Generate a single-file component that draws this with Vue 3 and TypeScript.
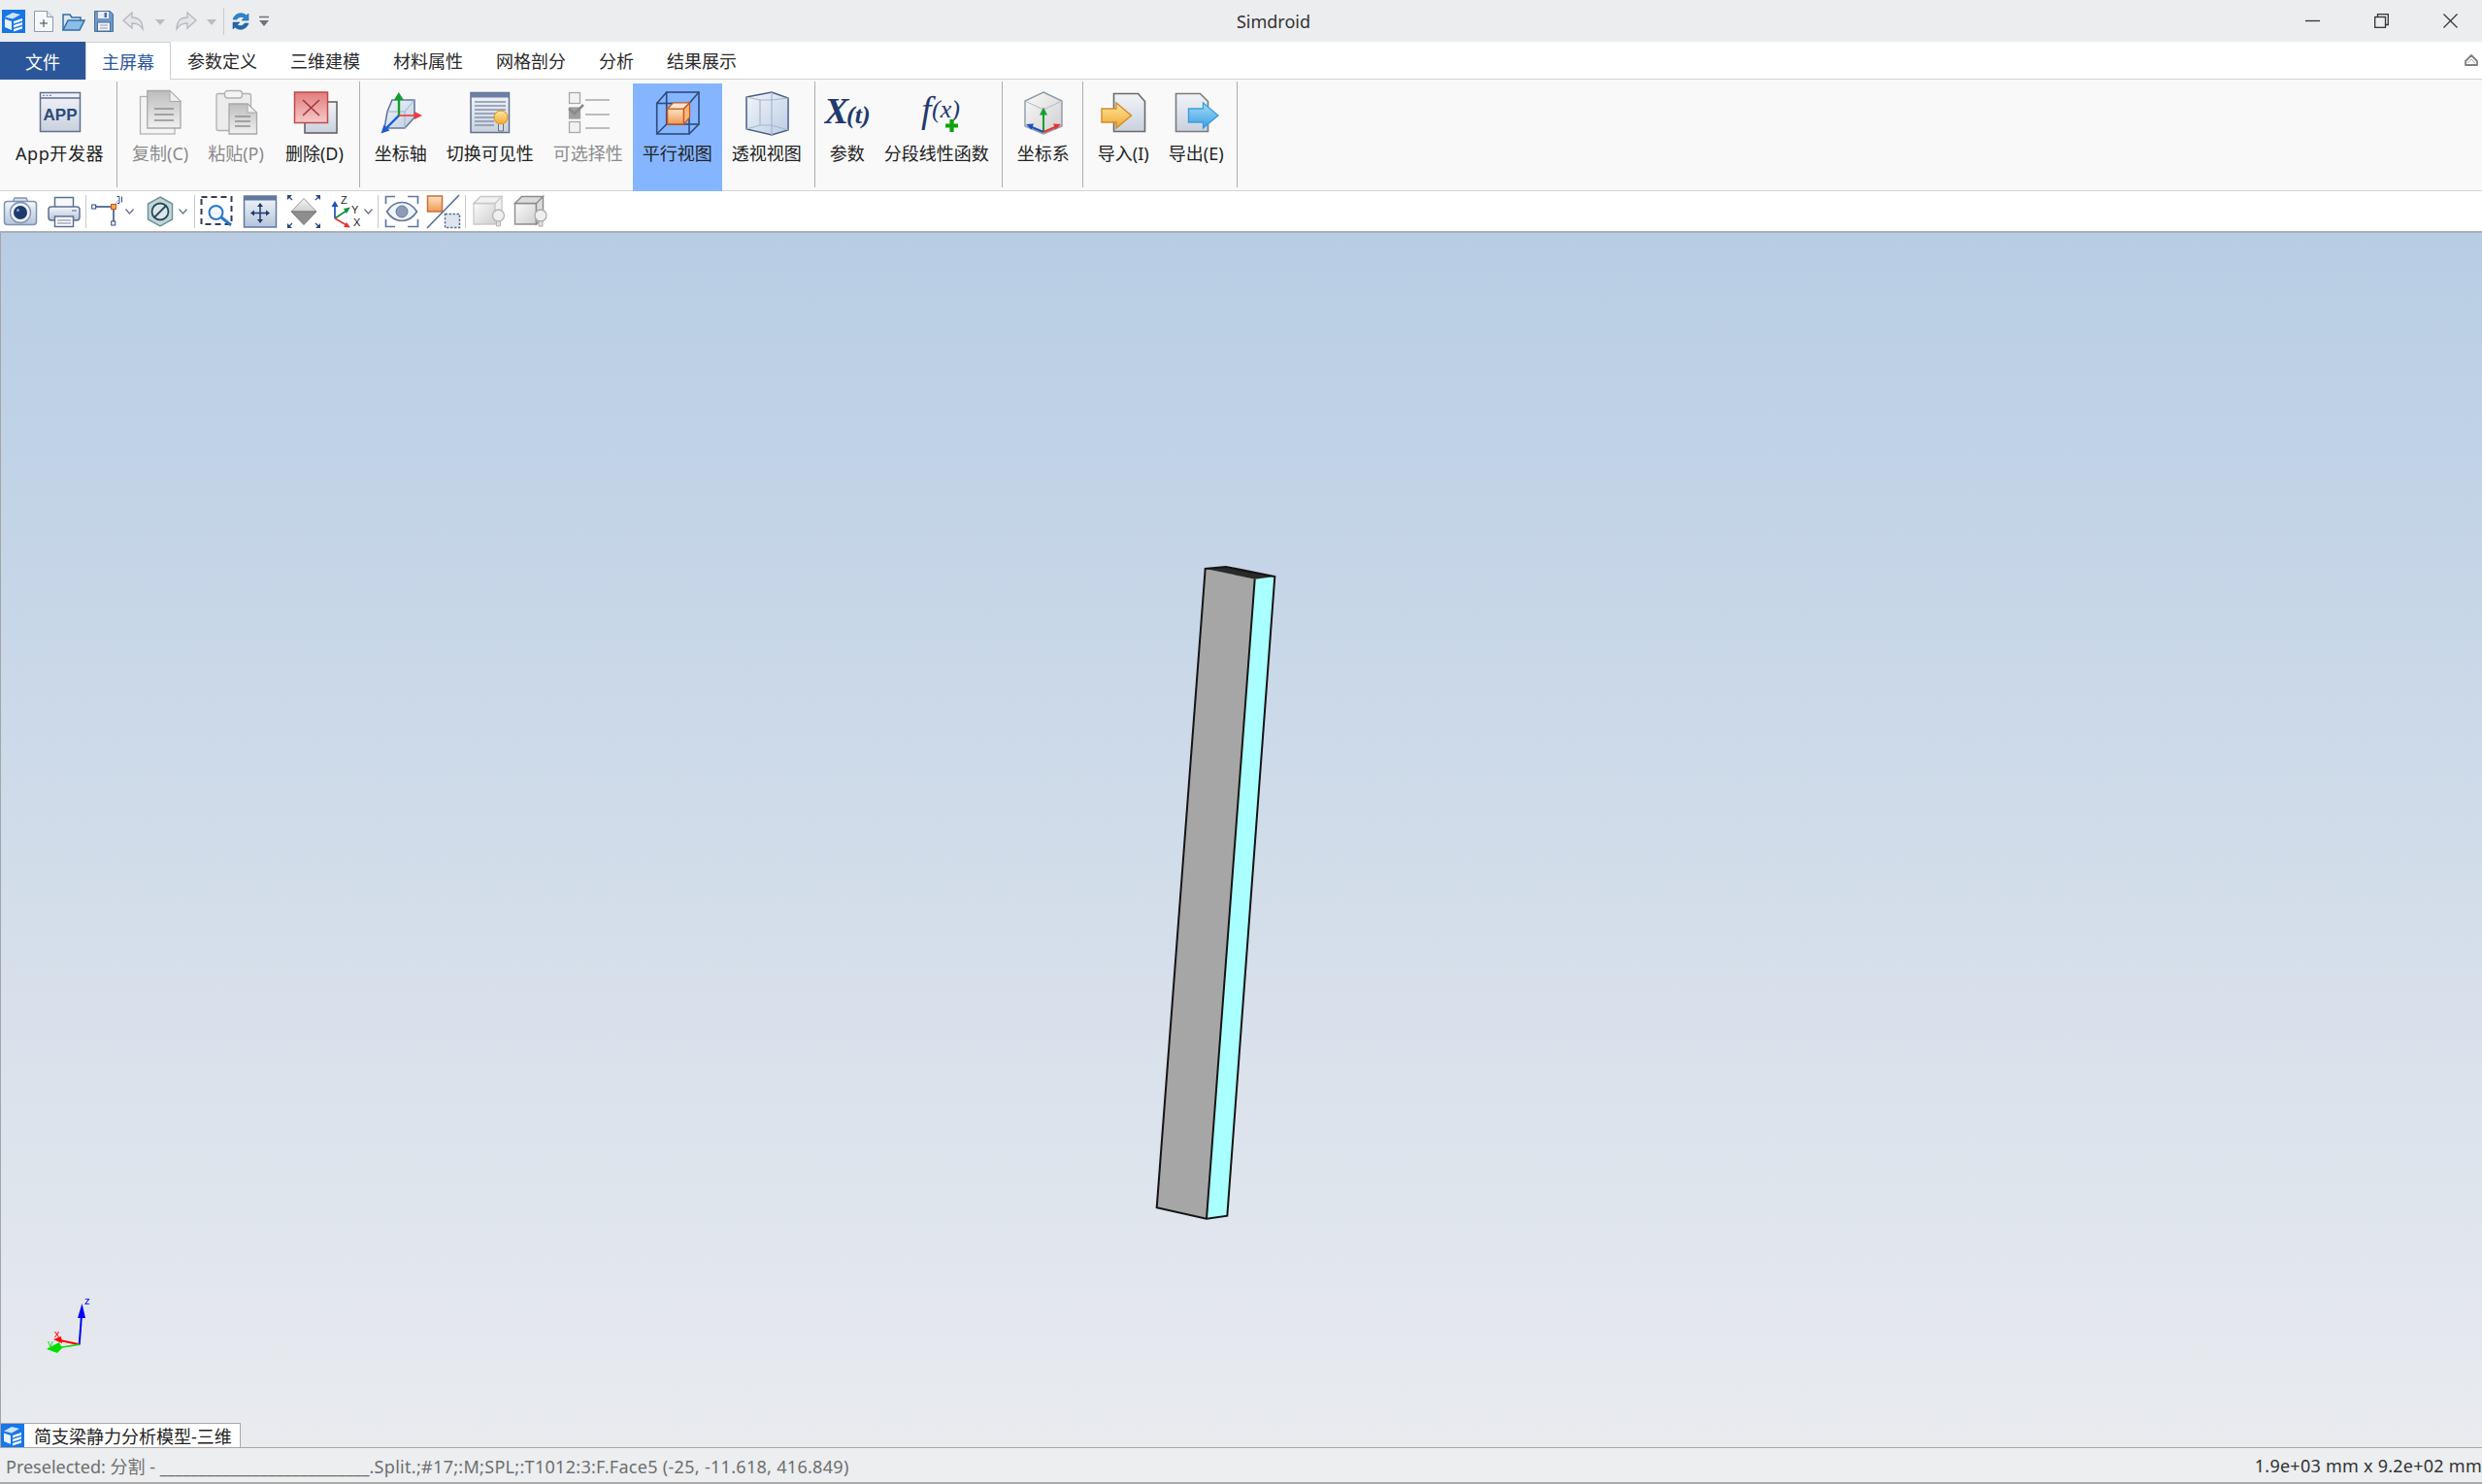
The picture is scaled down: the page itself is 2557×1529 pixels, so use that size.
<template>
  <div class="app">
    <!-- shared gradients -->
    <svg class="defs" width="0" height="0">
      <defs>
        <linearGradient id="gPage" x1="0" y1="0" x2="0" y2="1"><stop offset="0" stop-color="#f2f4f8" /><stop offset="1" stop-color="#c9d1de" /></linearGradient>
        <linearGradient id="gGray" x1="0" y1="0" x2="0" y2="1"><stop offset="0" stop-color="#bdbdbd" /><stop offset="1" stop-color="#f0f0f0" /></linearGradient>
        <linearGradient id="gRed" x1="0" y1="0" x2="0" y2="1"><stop offset="0" stop-color="#e27d7d" /><stop offset="1" stop-color="#f6c9c9" /></linearGradient>
        <linearGradient id="gGlass" x1="0" y1="0" x2="1" y2="1"><stop offset="0" stop-color="#f2f6fb" /><stop offset="1" stop-color="#bccde4" /></linearGradient>
        <linearGradient id="gOrange" x1="0" y1="0" x2="0" y2="1"><stop offset="0" stop-color="#fde3c6" /><stop offset="1" stop-color="#ee9a52" /></linearGradient>
        <linearGradient id="gYellow" x1="0" y1="0" x2="0" y2="1"><stop offset="0" stop-color="#fde7a4" /><stop offset="1" stop-color="#f0a92c" /></linearGradient>
        <linearGradient id="gBlue" x1="0" y1="0" x2="0" y2="1"><stop offset="0" stop-color="#a6dcf8" /><stop offset="1" stop-color="#3a9fe0" /></linearGradient>
        <linearGradient id="gBody" x1="0" y1="0" x2="0" y2="1"><stop offset="0" stop-color="#f5f7fa" /><stop offset="1" stop-color="#b4c4dc" /></linearGradient>
        <linearGradient id="gCube" x1="0" y1="0" x2="1" y2="1"><stop offset="0" stop-color="#fafafa" /><stop offset="1" stop-color="#cfcfcf" /></linearGradient>
        <linearGradient id="gDiamond" x1="0" y1="0" x2="0" y2="1"><stop offset="0" stop-color="#f4f4f4" /><stop offset="1" stop-color="#d0d0d0" /></linearGradient>
      </defs>
    </svg>

    <!-- title bar -->
    <header class="titlebar">
      <div class="qat">
        <svg class="qat-icon logo" viewBox="0 0 24 24">
          <rect width="24" height="24" fill="#1677e6" />
          <path d="M3 7.500 11 3l8 2-8 4.500z" fill="#cfe4fb" />
          <path d="M3 9.500l7 2.500v9l-7-3z" fill="#e8f2fd" />
          <path d="M12 12l9-3v2.600l-9 3zM12 16l9-3v2.600l-9 3zM12 20l9-3v2.600l-9 3z" fill="#fff" />
        </svg>
        <svg class="qat-icon" viewBox="0 0 24 24">
          <path d="M2.500 1.500h13l6 6v15h-19z" fill="#f7f8fb" stroke="#8d99ad" />
          <path d="M15.500 1.500v6h6" fill="#dfe4ec" stroke="#8d99ad" />
          <path d="M12 10v8M8 14h8" stroke="#444" />
        </svg>
        <svg class="qat-icon" viewBox="0 0 24 24">
          <path d="M1 21V5h7l2 3h9v4" fill="#dce7f4" stroke="#2f6ea8" stroke-width="1.500" />
          <path d="M1 21l5-10h17l-5 10z" fill="#8cbde6" stroke="#2f6ea8" stroke-width="1.500" />
        </svg>
        <svg class="qat-icon" viewBox="0 0 24 24">
          <path d="M2.500 1.500h16l3 3v18h-19z" fill="#6f98c8" stroke="#4a6f9c" />
          <rect x="6" y="2" width="11" height="7" fill="#e8eef6" />
          <rect x="12.500" y="3" width="2.500" height="5" fill="#4a6f9c" />
          <rect x="5.500" y="13" width="13" height="9" fill="#f2f4f8" stroke="#4a6f9c" />
          <path d="M8 16h8M8 19h8" stroke="#8d99ad" />
        </svg>
        <svg class="qat-icon" viewBox="0 0 24 24">
          <path d="M10 3 1 11l9 8v-5c5 0 8 1 11 6 0-8-4-12-11-12z" fill="#e3e5e8" stroke="#b4b8be" stroke-width="1.300" />
        </svg>
        <svg class="qat-drop" viewBox="0 0 10 24"><path d="M0 10h10l-5 6z" fill="#b9bcc1" /></svg>
        <svg class="qat-icon redo" viewBox="0 0 24 24">
          <path d="M14 3l9 8-9 8v-5c-5 0-8 1-11 6 0-8 4-12 11-12z" fill="#e3e5e8" stroke="#b4b8be" stroke-width="1.300" />
        </svg>
        <svg class="qat-drop" viewBox="0 0 10 24"><path d="M0 10h10l-5 6z" fill="#b9bcc1" /></svg>
        <span class="qat-sep"></span>
        <svg class="qat-icon refresh" viewBox="0 0 24 24">
          <path d="M4 10a8.500 8.500 0 0 1 14-4l2-2v7h-7l2.500-2.500A5 5 0 0 0 8 10z" fill="#2a86d0" stroke="#1f5f9a" stroke-width=".6" />
          <path d="M20 14a8.500 8.500 0 0 1-14 4l-2 2v-7h7l-2.500 2.500A5 5 0 0 0 16 14z" fill="#1d69ad" stroke="#1f5f9a" stroke-width=".6" />
        </svg>
        <svg class="qat-drop qat-more" viewBox="0 0 10 24"><path d="M0 7.500h10" stroke="#6d7278" stroke-width="1.500" /><path d="M0 11h10l-5 6z" fill="#6d7278" /></svg>
      </div>
      <div class="title">Simdroid</div>
      <div class="win-controls">
        <svg class="win-btn" viewBox="0 0 15 15"><path d="M0 7.500h15" stroke="#333" stroke-width="1.300" /></svg>
        <svg class="win-btn" viewBox="0 0 15 15"><path d="M3.500 3V.7h10.800v10.800H12" fill="none" stroke="#333" stroke-width="1.300" /><rect x=".7" y="3.500" width="10.800" height="10.800" fill="none" stroke="#333" stroke-width="1.300" /></svg>
        <svg class="win-btn" viewBox="0 0 15 15"><path d="M.5.5l14 14M14.500.5l-14 14" stroke="#333" stroke-width="1.200" /></svg>
      </div>
    </header>

    <!-- menu tabs -->
    <nav class="tabs">
      <div class="tab tab-file">文件</div>
      <div v-for="t in tabs" :key="t" class="tab" :class="{ active: t === activeTab }">{{ t }}</div>
      <svg class="collapse" viewBox="0 0 14 12">
        <path d="M7 1 1 7v4h12V7z" fill="none" stroke="#7d7f84" stroke-width="1.800" stroke-linejoin="round" />
        <path d="M3 9l4-4 4 4" fill="none" stroke="#a8aaae" stroke-width="1" />
      </svg>
    </nav>

    <!-- ribbon -->
    <section class="ribbon">
      <div class="group first">
        <div class="item app-item">
          <svg class="rb-icon" viewBox="0 0 48 48">
            <rect x="3.500" y="3.500" width="41" height="40" fill="url(#gPage)" stroke="#5f6f92" stroke-width="1.500" />
            <path d="M3.500 9h41" stroke="#5f6f92" stroke-width="1.500" />
            <path d="M6 6.300h2M9.500 6.300h2M13 6.300h2" stroke="#5f6f92" />
            <text x="24" y="32" class="app-glyph">APP</text>
          </svg>
          <span class="label">App开发器</span>
        </div>
      </div>

      <div class="group g-edit">
        <div class="item disabled">
          <svg class="rb-icon" viewBox="0 0 48 48">
            <rect x="3.500" y="7.500" width="35.500" height="38.500" fill="#f4f4f4" stroke="#b3b3b3" stroke-width="1.300" />
            <path d="M10.800 1.500H34L45 12.500V40H10.800z" fill="url(#gGray)" stroke="#a8a8a8" stroke-width="1.300" />
            <path d="M34 1.500v11h11z" fill="#efefef" stroke="#a8a8a8" />
            <path d="M18 20h20M18 26h20M18 32h20" stroke="#8f8f8f" stroke-width="1.500" />
          </svg>
          <span class="label">复制(C)</span>
        </div>
        <div class="item disabled">
          <svg class="rb-icon" viewBox="0 0 48 48">
            <rect x="4" y="4.500" width="35.500" height="38" rx="2" fill="#ececec" stroke="#b0b0b0" stroke-width="1.300" />
            <rect x="12.500" y="1.500" width="18" height="7.500" rx="3" fill="#f4f4f4" stroke="#b0b0b0" stroke-width="1.300" />
            <path d="M17 15h19l9.500 9v22H17z" fill="url(#gGray)" stroke="#a8a8a8" stroke-width="1.300" />
            <path d="M36 15v9h9.500z" fill="#efefef" stroke="#a8a8a8" />
            <path d="M23 28h16M23 33h16M23 38h16" stroke="#8f8f8f" stroke-width="1.500" />
          </svg>
          <span class="label">粘贴(P)</span>
        </div>
        <div class="item item-delete">
          <svg class="rb-icon" viewBox="0 0 48 48">
            <rect x="14" y="13" width="33" height="32" fill="url(#gPage)" stroke="#5b5b5b" stroke-width="1.500" />
            <rect x="3.500" y="3" width="34" height="31.500" fill="url(#gRed)" stroke="#bf4a4a" stroke-width="1.500" />
            <path d="M12 11l17 16M29 11 12 27" stroke="#a33a3a" stroke-width="1.700" />
          </svg>
          <span class="label">删除(D)</span>
        </div>
      </div>

      <div class="group">
        <div class="item">
          <svg class="rb-icon" viewBox="0 0 48 48">
            <path d="M15 11h23v18l-10 11H7l3-17z" fill="url(#gGlass)" stroke="#62789e" stroke-width="1.600" />
            <path d="M10 23h18l10-12M28 23v17" fill="none" stroke="#9fb1ca" />
            <path d="M22 27 V11" stroke="#12a02c" stroke-width="2.400" />
            <path d="M21.800 3l-5 8h10z" fill="#12a02c" />
            <path d="M22 27h16" stroke="#ee4a4a" stroke-width="1.800" />
            <path d="M46 27l-8-4v8z" fill="#ee3a3a" />
            <path d="M22 27 8 41" stroke="#1c5bd0" stroke-width="2.400" />
            <path d="M3.500 45.500l9-3-6-6z" fill="#1c5bd0" />
          </svg>
          <span class="label">坐标轴</span>
        </div>
        <div class="item">
          <svg class="rb-icon" viewBox="0 0 48 48">
            <rect x="4" y="3.500" width="39.500" height="41" fill="url(#gPage)" stroke="#5f6f92" stroke-width="1.500" />
            <rect x="4" y="3.500" width="39.500" height="5" fill="#6d7fa3" />
            <path d="M8 13h32M8 17h32M8 21h32M8 25h22M8 29h20M8 33h20M8 37h20" stroke="#8593ad" stroke-width="1.300" />
            <circle cx="35" cy="29" r="7" fill="url(#gYellow)" stroke="#d98e18" />
            <path d="M32.500 36v7h5v-7" fill="#d7dbe2" stroke="#6b6f78" />
          </svg>
          <span class="label">切换可见性</span>
        </div>
        <div class="item disabled">
          <svg class="rb-icon" viewBox="0 0 48 48">
            <rect x="4.500" y="3.500" width="11" height="11" fill="#f2f2f2" stroke="#a8a8a8" stroke-width="1.300" />
            <rect x="4.500" y="19" width="11" height="11" fill="#9f9f9f" stroke="#9f9f9f" stroke-width="1.300" />
            <path d="M4 20l6 5 9-9" fill="none" stroke="#8a8a8a" stroke-width="2.600" />
            <rect x="4.500" y="33.500" width="11" height="11" fill="#f2f2f2" stroke="#a8a8a8" stroke-width="1.300" />
            <path d="M21 11h25M21 26h25M21 40h25" stroke="#a8a8a8" stroke-width="1.600" />
          </svg>
          <span class="label">可选择性</span>
        </div>
        <div class="item active">
          <svg class="rb-icon" viewBox="0 0 48 48">
            <g fill="none" stroke="#2c4a7c" stroke-width="1.600">
              <rect x="12.700" y="3" width="33.300" height="33" />
              <rect x="2.700" y="14.500" width="33.300" height="31.500" />
              <path d="M2.700 14.500 12.700 3M36 14.500 46 3M2.700 46l10-10M36 46l10-10" />
            </g>
            <path d="M13.500 20h17v16h-17z" fill="url(#gOrange)" stroke="#c9541c" stroke-width="1.500" />
            <path d="M13.500 20l6-6h17l-6 6z" fill="#fde6cc" stroke="#c9541c" stroke-width="1.200" />
            <path d="M30.500 20l6-6v15l-6 7z" fill="#f6b57c" stroke="#c9541c" stroke-width="1.200" />
          </svg>
          <span class="label">平行视图</span>
        </div>
        <div class="item">
          <svg class="rb-icon" viewBox="0 0 48 48">
            <path d="M3 8 29 3l17 6v33l-17 5-26-6z" fill="url(#gGlass)" stroke="#4a5f86" stroke-width="1.500" />
            <path d="M3 8l14 3h12l17-2M17 11v26M29 3v44M3 41l14-4h12l17 5" fill="none" stroke="#a7b6cc" stroke-width="1.200" />
          </svg>
          <span class="label">透视视图</span>
        </div>
      </div>

      <div class="group">
        <div class="item">
          <svg class="rb-icon" viewBox="0 0 48 48">
            <text x="0" y="35" class="fn-big">X</text>
            <text x="23" y="35" class="fn-small">(t)</text>
          </svg>
          <span class="label">参数</span>
        </div>
        <div class="item">
          <svg class="rb-icon" viewBox="0 0 48 48">
            <text x="8" y="34" class="fn-f">f</text>
            <text x="19" y="29" class="fn-x">(x)</text>
            <path d="M39.500 31v13M33 37.500h13" stroke="#0ca30c" stroke-width="4.200" />
          </svg>
          <span class="label">分段线性函数</span>
        </div>
      </div>

      <div class="group">
        <div class="item">
          <svg class="rb-icon" viewBox="0 0 48 48">
            <path d="M24 3l19 9v26l-19 8-19-8V12z" fill="url(#gCube)" stroke="#8f9aa8" stroke-width="1.400" />
            <path d="M5 12l19 9 19-9M24 21v25" fill="none" stroke="#b3b9c2" />
            <path d="M24 44V25" stroke="#12a02c" stroke-width="2" />
            <path d="M24 18.500l-4 8h8z" fill="#12a02c" />
            <path d="M24 44l12-5" stroke="#e53333" stroke-width="2" />
            <path d="M42 36l-8-.500 2.500 6z" fill="#e53333" />
            <path d="M24 44l-12-5" stroke="#1c4fc0" stroke-width="2.200" />
            <path d="M6 36l8-.500-2.500 6z" fill="#1c4fc0" />
          </svg>
          <span class="label">坐标系</span>
        </div>
      </div>

      <div class="group">
        <div class="item">
          <svg class="rb-icon" viewBox="0 0 48 48">
            <path d="M14.500 4.500h25l7 8v31h-32z" fill="url(#gPage)" stroke="#6a6a6a" stroke-width="1.600" />
            <path d="M2 20h15v-6l15.500 13L17 40v-6H2z" fill="url(#gYellow)" stroke="#d58a2a" stroke-width="1.400" />
          </svg>
          <span class="label">导入(I)</span>
        </div>
        <div class="item">
          <svg class="rb-icon" viewBox="0 0 48 48">
            <path d="M3.500 4.500h25l8 8v31h-33z" fill="url(#gPage)" stroke="#7b7b7b" stroke-width="1.600" />
            <path d="M16.500 20h15v-6L47 27 31.500 40v-6h-15z" fill="url(#gBlue)" stroke="#3a9fe0" stroke-width="1.400" />
          </svg>
          <span class="label">导出(E)</span>
        </div>
      </div>
    </section>

    <!-- small toolbar -->
    <section class="toolbar">
      <div class="tb-group g1">
        <svg class="tb-icon" viewBox="0 0 36 36">
          <path d="M10 8l2-4h12l2 4" fill="#d8e2f0" stroke="#7f92b2" stroke-width="1.300" />
          <rect x="1.500" y="7.500" width="33" height="24" rx="3" fill="url(#gBody)" stroke="#7f92b2" stroke-width="1.500" />
          <circle cx="18" cy="19" r="10.500" fill="#eef2f8" stroke="#7f92b2" stroke-width="1.300" />
          <circle cx="18" cy="19" r="7" fill="#1d3a6e" />
          <circle cx="15.500" cy="16.500" r="1.500" fill="#8aa6cf" />
        </svg>
        <svg class="tb-icon" viewBox="0 0 36 36">
          <rect x="8.500" y="3.500" width="19" height="11" fill="#f7f8fa" stroke="#5d6f90" stroke-width="1.500" />
          <rect x="2" y="13" width="32" height="14" rx="3" fill="url(#gBody)" stroke="#5d6f90" stroke-width="1.500" />
          <rect x="8.500" y="23" width="19" height="10.500" fill="#fff" stroke="#5d6f90" stroke-width="1.500" />
          <path d="M11 27h14M11 30h14" stroke="#6d7f9f" />
          <path d="M26 17h5" stroke="#7f92b2" stroke-width="1.500" />
        </svg>
      </div>
      <div class="tb-group g2">
        <div class="tb-drop">
          <svg class="tb-icon" viewBox="0 0 36 36">
            <path d="M5 13h20v17" fill="none" stroke="#2c4a7c" stroke-width="1.500" />
            <path d="M25 13l5-7" stroke="#9fb0c8" stroke-width="1" />
            <rect x="2.700" y="11" width="4" height="4" fill="#fff" stroke="#2c4a7c" />
            <rect x="22.500" y="10.500" width="5" height="5" fill="#f6a24c" stroke="#c9541c" />
            <rect x="22.700" y="28" width="4" height="4" fill="#fff" stroke="#2c4a7c" />
            <path d="M28.500 2.500h2.500v7h-2M33.500 2.500v6" fill="none" stroke="#2c4a7c" />
          </svg>
          <svg class="tb-chev" viewBox="0 0 9 6"><path d="M.5.500 4.500 5l4-4.500" fill="none" stroke="#66758c" stroke-width="1.300" /></svg>
        </div>
        <div class="tb-drop">
          <svg class="tb-icon" viewBox="0 0 36 36">
            <path d="M18 3l12.500 7v16L18 33 5.500 26V10z" fill="#c5d6d8" stroke="#6b9597" stroke-width="1.500" />
            <circle cx="18" cy="18" r="8.500" fill="#dbe6e8" stroke="#244a5c" stroke-width="1.800" />
            <path d="M12 24 24 12" stroke="#244a5c" stroke-width="1.800" />
          </svg>
          <svg class="tb-chev" viewBox="0 0 9 6"><path d="M.5.500 4.500 5l4-4.500" fill="none" stroke="#66758c" stroke-width="1.300" /></svg>
        </div>
      </div>
      <div class="tb-group g3">
        <svg class="tb-icon" viewBox="0 0 36 36">
          <rect x="2.500" y="3" width="31" height="28" fill="none" stroke="#333b58" stroke-width="2" stroke-dasharray="6 4" />
          <circle cx="17.500" cy="19" r="7" fill="#eef5fc" stroke="#2a78c8" stroke-width="2" />
          <path d="M23 24l10 8" stroke="#2a78c8" stroke-width="3" />
        </svg>
        <svg class="tb-icon" viewBox="0 0 36 36">
          <rect x="1.500" y="2" width="33" height="32" fill="url(#gBody)" stroke="#62789e" stroke-width="1.500" />
          <rect x="1.500" y="2" width="33" height="4.500" fill="#62789e" />
          <path d="M18 12v15M10.500 19.500h15" stroke="#1d3a6e" stroke-width="1.500" />
          <path d="M18 9l-3 4h6zM18 30l-3-4h6zM8 19.500l4-3v6zM28 19.500l-4-3v6z" fill="#1d3a6e" />
        </svg>
        <svg class="tb-icon" viewBox="0 0 36 36">
          <path d="M18 4.500 31 18H5z" fill="url(#gDiamond)" stroke="#9a9a9a" />
          <path d="M5 18h26L18 31.500z" fill="#8e8e8e" stroke="#777" />
          <path d="M1 1h5L1 6zM35 1h-5l5 5zM1 35h5l-5-5zM35 35h-5l5-5z" fill="#2c4a7c" />
          <path d="M3 3l3 3M33 3l-3 3M3 33l3-3M33 33l-3-3" stroke="#2c4a7c" stroke-width="1.300" />
        </svg>
        <div class="tb-drop triad">
          <svg class="tb-icon" viewBox="0 0 36 36">
            <path d="M7 25V11" stroke="#1c4fc0" stroke-width="1.700" />
            <path d="M7 7l-3.500 6h7z" fill="#1c4fc0" />
            <path d="M7 25 19 17" stroke="#12913a" stroke-width="1.700" />
            <path d="M23 13.500l-7 1.500 3 5z" fill="#12913a" />
            <path d="M7 25 19 32" stroke="#e53333" stroke-width="1.700" />
            <path d="M23 34.500l-7-.500 3-5z" fill="#e53333" />
            <text x="13" y="10" class="tb-axis">Z</text>
            <text x="24" y="20" class="tb-axis">Y</text>
            <text x="26" y="33" class="tb-axis">X</text>
          </svg>
          <svg class="tb-chev" viewBox="0 0 9 6"><path d="M.5.500 4.500 5l4-4.500" fill="none" stroke="#66758c" stroke-width="1.300" /></svg>
        </div>
      </div>
      <div class="tb-group g4">
        <svg class="tb-icon" viewBox="0 0 36 36">
          <path d="M1.500 10V2.500H11M24 2.500h10.500V10M34.500 26v7.500H24M11 33.500H1.500V26" fill="none" stroke="#62789e" stroke-width="1.700" />
          <path d="M2.500 18C7 11 12 8.500 18 8.500S29 11 33.500 18C29 25 24 27.500 18 27.500S7 25 2.500 18z" fill="#f1f4f9" stroke="#62789e" stroke-width="1.700" />
          <circle cx="18" cy="18" r="6" fill="#8d9cb4" stroke="#62789e" />
        </svg>
        <svg class="tb-icon" viewBox="0 0 36 36">
          <rect x="1.500" y="2" width="15" height="16" fill="url(#gOrange)" stroke="#c9703a" stroke-width="1.500" />
          <path d="M34 1 1 35" stroke="#4e6a9c" stroke-width="1.500" />
          <rect x="19.500" y="20.500" width="15" height="14" fill="#dfe5ef" stroke="#5d6f90" stroke-width="1.500" stroke-dasharray="2.500 1.500" />
        </svg>
      </div>
      <div class="tb-group g5">
        <svg class="tb-icon" viewBox="0 0 36 36">
          <path d="M2 9.500h22V31H2z" fill="url(#gCube)" stroke="#c8c8c8" stroke-width="1.300" />
          <path d="M2 9.500 9 2.500h22l-7 7zM24 9.500l7-7V24l-7 7z" fill="#f1f1f1" stroke="#c8c8c8" stroke-width="1.300" />
          <circle cx="27.500" cy="22" r="6" fill="#efefef" stroke="#b5b5b5" stroke-width="1.300" />
          <path d="M25.500 28h4v5h-4z" fill="#e0e0e0" stroke="#b5b5b5" />
        </svg>
        <svg class="tb-icon" viewBox="0 0 36 36">
          <path d="M1.500 9.500h22V31h-22z" fill="url(#gCube)" stroke="#8c8c8c" stroke-width="1.400" />
          <path d="M1.500 9.500l7-7h22l-7 7zM23.500 9.500l7-7V24l-7 7z" fill="#dcdcdc" stroke="#8c8c8c" stroke-width="1.400" />
          <circle cx="28" cy="22" r="6" fill="#efefef" stroke="#aaa" stroke-width="1.300" />
          <path d="M26 28h4v5h-4z" fill="#e0e0e0" stroke="#aaa" />
        </svg>
      </div>
    </section>

    <!-- 3D viewport -->
    <main class="viewport">
      <svg class="scene" viewBox="0 240 2557 1251" preserveAspectRatio="none">
        <!-- beam -->
        <polygon points="1241.700,586 1292.700,596.700 1243,1255 1191.700,1244.300" fill="#a6a6a6" />
        <polygon points="1292.700,596.700 1313.300,594 1264.300,1252.700 1243,1255.700" fill="#aaffff" />
        <polygon points="1241.700,586 1263,584 1313.300,594 1292.700,596.700" fill="#2a2a2a" />
        <path d="M1241.700 586 1191.700 1244.300 1243 1255.700 1264.300 1252.700 1313.300 594 1263 584zM1292.700 596.700 1243 1255.700" fill="none" stroke="#141414" stroke-width="2" />
        <!-- triad -->
        <path d="M81.700 1385.300 84 1355" stroke="#0000ff" stroke-width="2" />
        <path d="M84.500 1343 80 1358h8z" fill="#0000ff" />
        <text x="87" y="1344" class="triad-z">z</text>
        <path d="M81.700 1385.300 62 1381" stroke="#ff0000" stroke-width="2" />
        <path d="M55 1380l8-3 1 7z" fill="#ff0000" />
        <text x="56" y="1378" class="triad-x">x</text>
        <path d="M81.700 1385.300 58 1389" stroke="#00e000" stroke-width="1.500" />
        <path d="M48 1390l13-7 3 6-5 5z" fill="#00e000" />
        <text x="49" y="1388" class="triad-y">y</text>
      </svg>
      <div class="doc-tab">
        <svg class="doc-logo" viewBox="0 0 24 24">
          <rect width="24" height="24" fill="#1677e6" />
          <path d="M3 7.500 11 3l8 2-8 4.500z" fill="#cfe4fb" />
          <path d="M3 9.500l7 2.500v9l-7-3z" fill="#e8f2fd" />
          <path d="M12 12l9-3v2.600l-9 3zM12 16l9-3v2.600l-9 3zM12 20l9-3v2.600l-9 3z" fill="#fff" />
        </svg>
        <span class="doc-title">简支梁静力分析模型-三维</span>
      </div>
    </main>

    <!-- status bar -->
    <footer class="statusbar">
      <span class="status-left">{{ preselected }}<span class="status-tail">{{ entity }}</span></span>
      <span class="status-right">{{ extent }}</span>
    </footer>
  </div>
</template>

<script setup lang="ts">
const activeTab = '主屏幕';
const tabs: string[] = ['主屏幕', '参数定义', '三维建模', '材料属性', '网格剖分', '分析', '结果展示'];

const preselected = 'Preselected: 分割 - ___________________________';
const entity = '.Split.;#17;:M;SPL;:T1012:3:F.Face5 (-25, -11.618, 416.849)';
const extent = '1.9e+03 mm x 9.2e+02 mm';
</script>

<style>
html,
body {
  margin: 0;
  padding: 0;
  overflow: hidden;
}
</style>

<style scoped>
.app {
  width: 2557px;
  height: 1529px;
  display: flex;
  flex-direction: column;
  overflow: hidden;
  font-family: 'Noto Sans', 'Noto Sans CJK SC', sans-serif;
  font-size: 18px;
  color: #222;
  background: #fff;
}

.defs {
  position: absolute;
}

/* title bar */
.titlebar {
  height: 43px;
  flex: none;
  display: flex;
  align-items: center;
  background: #ecedef;
}

.qat {
  width: 278px;
  flex: none;
  display: flex;
  align-items: center;
  gap: 7px;
  padding-left: 2px;
  box-sizing: border-box;
}

.qat-icon {
  width: 24px;
  height: 24px;
  flex: none;
}

.qat-drop {
  width: 10px;
  height: 24px;
  flex: none;
  margin-left: 3px;
}

.qat-more {
  margin-left: 0;
}

.redo {
  margin-left: 2px;
}

.refresh {
  margin-left: -2px;
}

.qat-sep {
  width: 1px;
  height: 28px;
  background: #c9cbce;
}

.title {
  flex: 1;
  text-align: center;
  padding-right: 29px;
  color: #333;
}

.win-controls {
  display: flex;
  gap: 56px;
  padding-right: 25px;
}

.win-btn {
  width: 15px;
  height: 15px;
  display: block;
}

/* tabs */
.tabs {
  height: 39px;
  flex: none;
  box-sizing: border-box;
  display: flex;
  background: #fff;
  border-bottom: 1px solid #d2d2d2;
}

.tab {
  height: 38px;
  padding: 0 17px;
  box-sizing: border-box;
  display: flex;
  align-items: center;
  white-space: nowrap;
  color: #2a2a2a;
}

.tab-file {
  width: 88px;
  height: 39px;
  padding: 0;
  justify-content: center;
  background: #2b579a;
  color: #fff;
}

.tab.active {
  height: 39px;
  padding: 0 16px;
  color: #2b579a;
  border: 1px solid #cfcfcf;
  border-bottom: none;
  background: #fff;
}

.collapse {
  width: 14px;
  height: 12px;
  margin: 13px 4px 0 auto;
}

/* ribbon */
.ribbon {
  height: 115px;
  flex: none;
  box-sizing: border-box;
  display: flex;
  background: #f9f9f9;
  border-bottom: 1px solid #d4d4d4;
}

.group {
  height: 109px;
  margin-top: 2px;
  display: flex;
  padding: 0 3px 0 5px;
  border-right: 1px solid #aeaeae;
}

.group.first {
  padding: 0 0 0 3px;
  width: 121px;
  box-sizing: border-box;
  justify-content: center;
}

.g-edit {
  padding-right: 6px;
}

.item-delete {
  margin-left: 2px;
}

.item {
  height: 111px;
  margin-top: 2px;
  padding: 6px 10px 0;
  box-sizing: border-box;
  display: flex;
  flex-direction: column;
  align-items: center;
  white-space: nowrap;
}

.app-item {
  padding: 6px 0 0;
}

.app-item .label {
  letter-spacing: .6px;
}

.item.active {
  background: #85b5ff;
}

.item.disabled .label {
  color: #8b8b8b;
}

.rb-icon {
  width: 48px;
  height: 48px;
  flex: none;
  margin: 0 -6px;
}

.label {
  margin-top: 4px;
  line-height: 28px;
}

.app-glyph {
  font-family: 'Liberation Sans', sans-serif;
  font-size: 17px;
  font-weight: 700;
  text-anchor: middle;
  fill: #2c4a7c;
}

.fn-big {
  font-family: 'Liberation Serif', serif;
  font-style: italic;
  font-weight: 700;
  font-size: 38px;
  fill: #1f3a6c;
}

.fn-small {
  font-family: 'Liberation Serif', serif;
  font-style: italic;
  font-weight: 700;
  font-size: 26px;
  fill: #1f3a6c;
}

.fn-f {
  font-family: 'Liberation Serif', serif;
  font-style: italic;
  font-size: 38px;
  fill: #1f3a6c;
}

.fn-x {
  font-family: 'Liberation Serif', serif;
  font-style: italic;
  font-size: 26px;
  fill: #1f3a6c;
}

/* small toolbar */
.toolbar {
  height: 43px;
  flex: none;
  box-sizing: border-box;
  display: flex;
  align-items: center;
  background: #fff;
  border-bottom: 2px solid #a9b0b8;
}

.tb-group {
  display: flex;
  align-items: center;
  gap: 9px;
  height: 34px;
  border-right: 1px solid #c9c9c9;
}

.g1 {
  padding: 0 4px 0 3px;
}

.g2 {
  padding: 0 7px 0 3px;
}

.g3 {
  padding: 0 5px 0 4px;
}

.g4 {
  padding: 0 4px 0 6px;
  gap: 7px;
}

.g5 {
  padding: 0 0 0 6px;
  gap: 7px;
  border-right: none;
}

.tb-icon {
  width: 36px;
  height: 36px;
  flex: none;
}

.tb-drop {
  display: flex;
  align-items: center;
  gap: 1px;
}

.triad {
  margin-left: -2px;
}

.tb-chev {
  width: 9px;
  height: 6px;
  flex: none;
}

.tb-axis {
  font-family: 'Liberation Sans', sans-serif;
  font-size: 11px;
  fill: #222;
}

/* viewport */
.viewport {
  flex: 1;
  min-height: 0;
  position: relative;
  display: flex;
  flex-direction: column;
  justify-content: flex-end;
  background: linear-gradient(180deg, #b8cde4 0%, #e9ebef 100%);
  border-left: 1px solid #a2a6ab;
}

.scene {
  position: absolute;
  left: -1px;
  top: 0;
  width: 2557px;
  height: 100%;
}

.triad-z,
.triad-x,
.triad-y {
  font-family: 'Liberation Sans', sans-serif;
  font-size: 11px;
}

.triad-z {
  fill: #0000ff;
}

.triad-x {
  fill: #ff0000;
}

.triad-y {
  fill: #00e000;
}

.doc-tab {
  position: relative;
  width: 246px;
  height: 24px;
  display: flex;
  align-items: center;
  background: #fff;
  border: 1px solid #a9a9a9;
  border-left: none;
  border-bottom: none;
}

.doc-logo {
  width: 24px;
  height: 24px;
  flex: none;
}

.doc-title {
  margin-left: 10px;
  white-space: nowrap;
  color: #222;
}

/* status bar */
.statusbar {
  height: 38px;
  flex: none;
  box-sizing: border-box;
  display: flex;
  justify-content: space-between;
  align-items: center;
  padding-left: 6px;
  background: #eceef0;
  border-top: 1px solid #a9a9a9;
  border-bottom: 2px solid #a9a9a9;
  white-space: nowrap;
}

.status-left {
  color: #6e6e6e;
}

.status-tail {
  letter-spacing: .3px;
}

.status-right {
  color: #333;
  letter-spacing: .25px;
}
</style>
